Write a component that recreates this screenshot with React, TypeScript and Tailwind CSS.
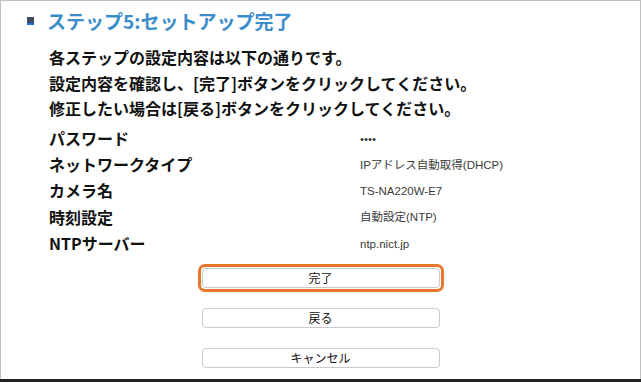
const rows: { label: string; value: string }[] = [
  { label: 'パスワード', value: '••••' },
  { label: 'ネットワークタイプ', value: 'IPアドレス自動取得(DHCP)' },
  { label: 'カメラ名', value: 'TS-NA220W-E7' },
  { label: '時刻設定', value: '自動設定(NTP)' },
  { label: 'NTPサーバー', value: 'ntp.nict.jp' },
]

function SetupButton({ label, focused = false }: { label: string; focused?: boolean }) {
  return (
    <div className={focused ? 'rounded-[7px] border-[3px] border-[#e8762d] p-px' : 'p-1'}>
      <button className="flex h-[20px] w-[238px] items-center justify-center rounded-[4px] border border-[#c9c9c9] bg-white text-[12px] text-[#111]">
        {label}
      </button>
    </div>
  )
}

export default function App() {
  return (
    <div
      className="flex h-[383px] w-[641px] flex-col bg-white"
      style={{ fontFamily: '"Noto Sans CJK JP", "Liberation Sans", sans-serif' }}
    >
      <div className="flex flex-1 flex-col border-l border-r border-t border-[#c3c0c3]">
        <div className="mt-[8px] flex items-center pl-[26px]">
          <span className="h-[8px] w-[7px] border-b-2 border-[#1f6fe8] bg-[#3e4a5d]" />
          <h2 className="ml-[13px] text-[19px] font-bold leading-[24px] text-[#3b8dca]">
            ステップ5:セットアップ完了
          </h2>
        </div>

        <div className="mt-[12px] pl-[48px] text-[16px] font-bold leading-[25.5px] text-[#111]">
          <p>各ステップの設定内容は以下の通りです。</p>
          <p>設定内容を確認し、[完了]ボタンをクリックしてください。</p>
          <p>修正したい場合は[戻る]ボタンをクリックしてください。</p>
        </div>

        <div className="mt-[3px] pl-[48px]">
          {rows.map((row) => (
            <div key={row.label} className="flex h-[26.3px] items-center">
              <span className="w-[311px] text-[16px] font-bold text-[#111]">{row.label}</span>
              <span
                className="mt-[3px] text-[11.5px] text-[#3a3a3a]"
                style={{ fontFamily: '"Liberation Sans", "Noto Sans CJK JP", sans-serif' }}
              >
                {row.value}
              </span>
            </div>
          ))}
        </div>

        <div className="mt-[8px] flex flex-col items-center gap-[12px]">
          <SetupButton label="完了" focused />
          <SetupButton label="戻る" />
          <SetupButton label="キャンセル" />
        </div>
      </div>
      <div className="mb-px h-[3px] w-full bg-[#222]" />
    </div>
  )
}
